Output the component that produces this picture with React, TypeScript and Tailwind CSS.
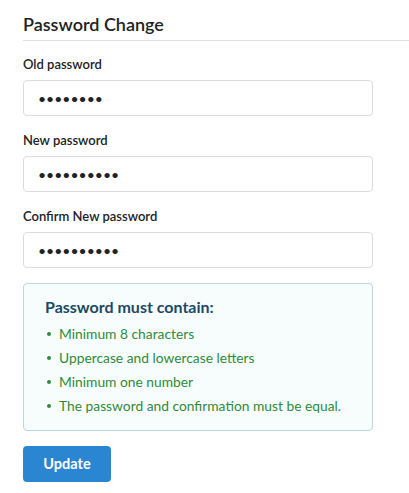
import { useState } from "react";

const rules = [
  "Minimum 8 characters",
  "Uppercase and lowercase letters",
  "Minimum one number",
  "The password and confirmation must be equal.",
];

function PasswordField({ label, value }: { label: string; value: string }) {
  const [v, setV] = useState(value);
  return (
    <div className="flex flex-col">
      <label className="text-[13px] font-semibold text-[#222] leading-[16px] mb-[8px]">{label}</label>
      <input
        type="password"
        value={v}
        onChange={(e) => setV(e.target.value)}
        className="w-[350px] h-[36px] rounded-[4px] border border-[#dcdcdc] bg-white px-[14px] text-[14px] text-[#222] outline-none"
      />
    </div>
  );
}

export default function App() {
  return (
    <div className="w-[409px] h-[493px] bg-white font-['Lato','Liberation_Sans',sans-serif] pl-[23px] pt-[12px]">
      <h2 className="text-[18px] font-semibold text-[#222] leading-[24px] pb-[4px] border-b border-[#e0e0e0]">
        Password Change
      </h2>
      <div className="flex flex-col gap-[16px] mt-[15px]">
        <PasswordField label="Old password" value="12345678" />
        <PasswordField label="New password" value="1234567890" />
        <PasswordField label="Confirm New password" value="1234567890" />
      </div>
      <div className="w-[350px] mt-[15px] rounded-[4px] border border-[#bcd7da] bg-[#f7fdfd] pl-[21px] pt-[13px] pb-[12px]">
        <h3 className="text-[16px] font-bold text-[#1d4a63] leading-[20px] mb-[5px]">Password must contain:</h3>
        <ul className="flex flex-col">
          {rules.map((r) => (
            <li key={r} className="flex items-center text-[13.8px] text-[#2f8a3c] leading-[24px]">
              <span className="w-[4px] h-[4px] rounded-full bg-[#2f8a3c] ml-[2px] mr-[8px]" />
              {r}
            </li>
          ))}
        </ul>
      </div>
      <button className="mt-[15px] w-[88px] h-[36px] rounded-[4px] bg-[#2a86d1] text-white text-[14.5px] font-bold">
        Update
      </button>
    </div>
  );
}
